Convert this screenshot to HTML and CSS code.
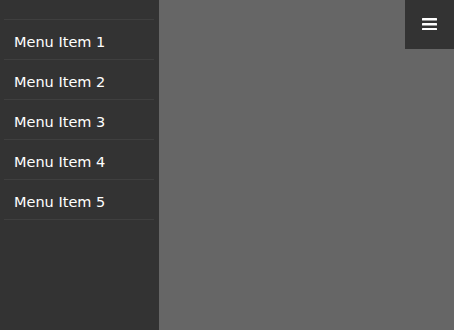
FILE: index.html
```html
<!DOCTYPE html>
<html>
<head>
<meta charset="utf-8">
<link rel="stylesheet" href="styles.css">
</head>
<body>
<div class="page">
  <nav class="sidebar">
    <ul class="menu">
      <li class="menu-item">Menu Item 1</li>
      <li class="menu-item">Menu Item 2</li>
      <li class="menu-item">Menu Item 3</li>
      <li class="menu-item">Menu Item 4</li>
      <li class="menu-item">Menu Item 5</li>
    </ul>
  </nav>
  <main class="content">
    <button class="toggle" aria-label="Menu">
      <svg width="15" height="12" viewBox="0 0 15 12">
        <rect x="0" y="0" width="15" height="2.4" rx="0.5" fill="#fff"/>
        <rect x="0" y="5" width="15" height="2.4" rx="0.5" fill="#fff"/>
        <rect x="0" y="10" width="15" height="2.4" rx="0.5" fill="#fff"/>
      </svg>
    </button>
  </main>
</div>
</body>
</html>
```
FILE: styles.css
```css
html, body {
  margin: 0;
  padding: 0;
  height: 100%;
}
body {
  font-family: "DejaVu Sans", Verdana, sans-serif;
  background: #666;
}
.page {
  display: flex;
  height: 330px;
}
.sidebar {
  width: 159px;
  flex: none;
  background: #333;
  padding: 19px 5px 0 4px;
  box-sizing: border-box;
}
.menu {
  list-style: none;
  margin: 0;
  padding: 0;
  border-bottom: 1px solid #3f3f3f;
}
.menu-item {
  border-top: 1px solid #3f3f3f;
  height: 34px;
  line-height: 34px;
  padding: 5px 0 0 10px;
  color: #fff;
  font-size: 14.5px;
}
.content {
  flex: 1;
  background: #666;
  position: relative;
}
.toggle {
  position: absolute;
  top: 0;
  right: 0;
  width: 49px;
  height: 49px;
  border: none;
  padding: 0;
  margin: 0;
  background: #333;
  display: flex;
  align-items: center;
  justify-content: center;
}
.toggle svg {
  display: block;
  margin-top: -1px;
}
```
